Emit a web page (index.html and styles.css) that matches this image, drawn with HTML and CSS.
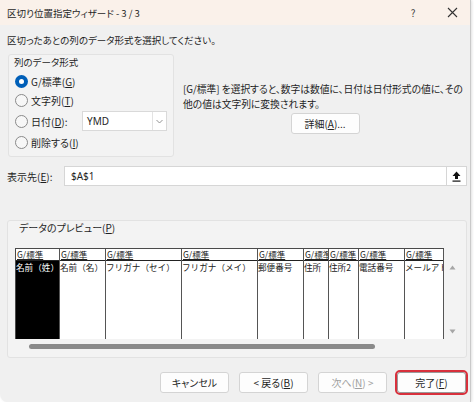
FILE: index.html
```html
<!DOCTYPE html>
<html lang="ja">
<head>
<meta charset="utf-8">
<link rel="stylesheet" href="styles.css">
</head>
<body>
<div class="window">
  <div class="titlebar">
    <span class="title">区切り位置指定ウィザード - 3 / 3</span>
    <span class="help">?</span>
    <span class="close"><svg width="11" height="11" viewBox="0 0 11 11"><path d="M1 1 L10 10 M10 1 L1 10" stroke="#333" stroke-width="1.1" fill="none"/></svg></span>
  </div>
  <div class="content">
    <div class="intro">区切ったあとの列のデータ形式を選択してください。</div>
    <div class="toprow">
      <div class="group fmt">
        <div class="legend">列のデータ形式</div>
        <div class="radios">
          <div class="rrow r1"><span class="radio on"></span><span>G/標準(<u>G</u>)</span></div>
          <div class="rrow r2"><span class="radio"></span><span>文字列(<u>T</u>)</span></div>
          <div class="rrow r3"><span class="radio"></span><span class="datelabel">日付(<u>D</u>):</span>
            <div class="select"><span class="sval">YMD</span><span class="sbtn"><svg width="7" height="5" viewBox="0 0 7 5"><path d="M0.5 1 L3.5 4 L6.5 1" stroke="#888" stroke-width="0.9" fill="none"/></svg></span></div>
          </div>
          <div class="rrow r4"><span class="radio"></span><span>削除する(<u>I</u>)</span></div>
        </div>
      </div>
      <div class="desc">
        <p class="desctext">[G/標準] を選択すると、数字は数値に、日付は日付形式の値に、その<br>他の値は文字列に変換されます。</p>
        <div class="btn detail">詳細(<u>A</u>)...</div>
      </div>
    </div>
    <div class="destrow">
      <span class="destlabel">表示先(<u>E</u>):</span>
      <div class="destinput">$A$1</div>
      <div class="destbtn"><svg width="9" height="11" viewBox="0 0 9 11"><path d="M4.5 0.5 L8.5 5 L6 5 L6 8 L3 8 L3 5 L0.5 5 Z" fill="#111"/><rect x="0.5" y="9.5" width="8" height="1.2" fill="#111"/></svg></div>
    </div>
    <div class="group preview">
      <div class="legend">データのプレビュー(<u>P</u>)</div>
      <div class="previewbody">
        <div class="grid">
          <div class="col sel"><div class="hd"><u>G/標準</u></div><div class="cell">名前（姓）</div></div>
          <div class="col"><div class="hd"><u>G/標準</u></div><div class="cell">名前（名）</div></div>
          <div class="col"><div class="hd"><u>G/標準</u></div><div class="cell">フリガナ（セイ）</div></div>
          <div class="col"><div class="hd"><u>G/標準</u></div><div class="cell">フリガナ（メイ）</div></div>
          <div class="col"><div class="hd"><u>G/標準</u></div><div class="cell">郵便番号</div></div>
          <div class="col"><div class="hd"><u>G/標準</u></div><div class="cell">住所</div></div>
          <div class="col"><div class="hd"><u>G/標準</u></div><div class="cell">住所2</div></div>
          <div class="col"><div class="hd"><u>G/標準</u></div><div class="cell">電話番号</div></div>
          <div class="col"><div class="hd"><u>G/標準</u></div><div class="cell">メールアドレス</div></div>
        </div>
        <div class="vscroll">
          <svg width="7" height="5" viewBox="0 0 7 5"><path d="M3.5 0.5 L6.5 4.5 L0.5 4.5 Z" fill="#a6a6a6"/></svg>
          <svg width="7" height="5" viewBox="0 0 7 5"><path d="M0.5 0.5 L6.5 0.5 L3.5 4.5 Z" fill="#a6a6a6"/></svg>
        </div>
      </div>
      <div class="hscroll"><div class="thumb"></div></div>
    </div>
    <div class="buttons">
      <div class="btn">キャンセル</div>
      <div class="btn">&lt; 戻る(<u>B</u>)</div>
      <div class="btn disabled">次へ(<u>N</u>) &gt;</div>
      <div class="btn default">完了(<u>F</u>)</div>
    </div>
  </div>
</div>
</body>
</html>
```

FILE: styles.css
```css
* { box-sizing: border-box; }
html, body { margin: 0; padding: 0; }
body {
  width: 474px;
  height: 402px;
  background: #ffffff;
  overflow: hidden;
  font-family: "Noto Sans CJK JP", "Noto Sans", sans-serif;
  font-feature-settings: "palt";
  font-size: 9.5px;
  color: #1f1f1f;
}
u { text-decoration-thickness: 1px; text-underline-offset: 1px; }
.window {
  width: 471px;
  height: 402px;
  background: #f0f0f0;
  border-right: 1px solid #c9c9c9;
  border-bottom-left-radius: 8px;
  box-shadow: 1px 0 3px rgba(0,0,0,0.12);
  display: flex;
  flex-direction: column;
}
.titlebar {
  height: 25px;
  background: #faf1ea;
  display: flex;
  align-items: center;
  padding-left: 7px;
}
.title { flex: 1; line-height: 14px; }
.help { width: 12px; text-align: center; color: #444; font-size: 10px; margin-right: 28px; }
.close { width: 11px; height: 11px; margin-right: 12px; display: flex; }
.content { padding: 0 3px 0 7px; display: flex; flex-direction: column; }
.intro { margin-top: 8px; line-height: 14px; height: 14px; white-space: nowrap; }
.toprow { display: flex; margin-top: 7px; }
.group {
  border: 1px solid #e2e2e2;
  border-radius: 3px;
  background: #f3f3f3;
}
.fmt { width: 166px; height: 103px; margin-left: 1px; padding-left: 5px; }
.legend { line-height: 13px; height: 13px; margin-top: 1px; }
.radios { margin-top: 3px; display: flex; flex-direction: column; }
.rrow { display: flex; align-items: center; white-space: nowrap; font-size: 10px; }
.r1 { height: 19px; }
.r2 { height: 19px; }
.r3 { height: 22px; }
.r4 { height: 21px; }
.radio {
  width: 13px; height: 13px; border-radius: 50%;
  border: 1px solid #8a8a8a; background: #f7f7f7;
  margin-left: 1px; margin-right: 3px; flex: none;
}
.radio.on { border: none; background: #005fb8; position: relative; }
.radio.on::after {
  content: ""; position: absolute; left: 4px; top: 4px;
  width: 5px; height: 5px; border-radius: 50%; background: #fff;
}
.datelabel { width: 51px; }
.select {
  width: 85px; height: 20px; background: #fff;
  border: 1px solid #d9d9d9; display: flex; align-items: center;
}
.sval { flex: 1; padding-left: 4px; font-family: "Noto Sans", sans-serif; font-size: 10px; }
.sbtn { width: 14px; height: 18px; border-left: 1px solid #e3e3e3; display: flex; align-items: center; justify-content: center; }
.desc { margin-left: 9px; width: 284px; padding-top: 28px; display: flex; flex-direction: column; align-items: center; }
.desctext { margin: 0; line-height: 15px; width: 100%; white-space: nowrap; font-size: 9.8px; letter-spacing: -0.05px; }
.btn {
  height: 21px; width: 69px; background: #fdfdfd;
  border: 1px solid #d4d4d4; border-radius: 3px;
  display: flex; align-items: center; justify-content: center;
  white-space: nowrap; flex: none; font-size: 10px;
}
.detail { margin-top: 1px; }
.destrow { display: flex; align-items: center; margin-top: 9px; height: 20px; }
.destlabel { width: 57px; font-size: 10px; }
.destinput {
  width: 382px; height: 20px; background: #fff; border: 1px solid #d6d6d6;
  border-right: none; padding-left: 6px; line-height: 18px;
  font-family: "Noto Sans", sans-serif; font-size: 10px;
}
.destbtn {
  width: 21px; height: 20px; background: #fff; border: 1px solid #d6d6d6;
  display: flex; align-items: center; justify-content: center;
}
.preview { margin-top: 34px; width: 460px; height: 138px; padding-left: 7px; }
.preview .legend { padding-left: 4px; margin-top: 0; font-size: 10px; }
.previewbody { display: flex; margin-top: 14px; width: 445px; }
.grid {
  display: grid;
  grid-template-columns: 44px 46px 76px 76px 46px 25px 30px 46px 39px;
  height: 91px; width: 429px; flex: none;
  background: #fff;
  border-left: 1px solid #4a4a4a;
  border-top: 1px solid #4a4a4a;
  font-feature-settings: normal;
}
.col { display: flex; flex-direction: column; border-right: 1px solid #555; overflow: hidden; min-width: 0; }
.hd {
  height: 12px; border-bottom: 1px solid #222; font-size: 8.5px; line-height: 11px;
  padding-left: 1px; white-space: nowrap; overflow: hidden; color: #222;
}
.hd u { text-underline-offset: 0.5px; }
.cell { flex: 1; font-size: 8.6px; line-height: 13px; white-space: nowrap; overflow: hidden; color: #222; }
.sel .cell { background: #000; color: #fff; }
.vscroll {
  width: 16px; flex: none; display: flex; flex-direction: column; align-items: center;
  justify-content: space-between; padding: 17px 0 5px 0; height: 91px;
}
.hscroll { margin-top: 5px; padding-left: 14px; height: 5px; }
.thumb { width: 346px; height: 5px; border-radius: 3px; background: #8a8a8a; }
.buttons { display: flex; justify-content: flex-end; gap: 10px; margin-top: 14px; padding-right: 1px; }
.btn.disabled { color: #a0a0a0; }
.btn.default { border: 1px solid #9a9a9a; outline: 2px solid #d8303c; outline-offset: 0; }
```
